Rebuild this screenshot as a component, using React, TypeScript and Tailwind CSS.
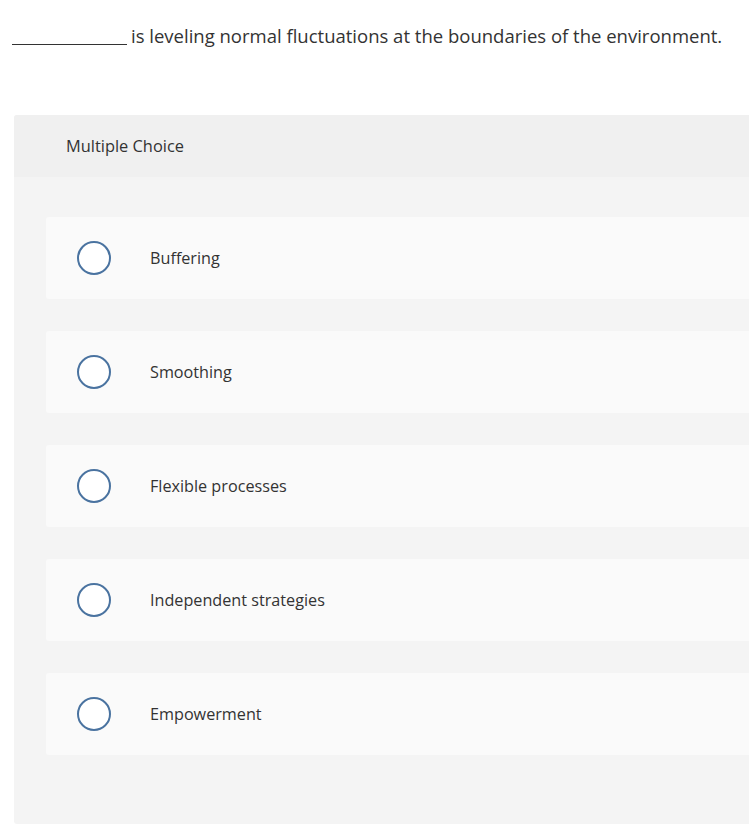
import React from "react";

const options = [
  "Buffering",
  "Smoothing",
  "Flexible processes",
  "Independent strategies",
  "Empowerment",
];

export default function App() {
  return (
    <div
      className="w-[749px] h-[835px] bg-white overflow-hidden text-[#333333]"
      style={{ fontFamily: "'Open Sans', Lato, sans-serif" }}
    >
      <div className="pt-[24px] pl-[12px] flex items-end h-[47px]">
        <span className="inline-block w-[115px] border-b border-[#333333] mb-[2px]" />
        <span className="ml-[4px] text-[18.5px] leading-[22px]">
          is leveling normal fluctuations at the boundaries of the environment.
        </span>
      </div>
      <div className="mt-[68px] ml-[14px] w-[745px] rounded-l-[3px] bg-[#f4f4f4] pb-[69px]">
        <div className="h-[62px] bg-[#f0f0f0] flex items-center pl-[52px] text-[16.4px] rounded-tl-[3px]">
          Multiple Choice
        </div>
        <div className="pt-[40px] pl-[32px] flex flex-col gap-[32px]">
          {options.map((o) => (
            <div
              key={o}
              className="h-[82px] bg-[#fafafa] rounded-l-[3px] flex items-center"
            >
              <span className="ml-[31px] w-[34px] h-[34px] rounded-full border-2 border-[#4a73a0] bg-white shrink-0" />
              <span className="ml-[39px] text-[16.2px]">{o}</span>
            </div>
          ))}
        </div>
      </div>
    </div>
  );
}
